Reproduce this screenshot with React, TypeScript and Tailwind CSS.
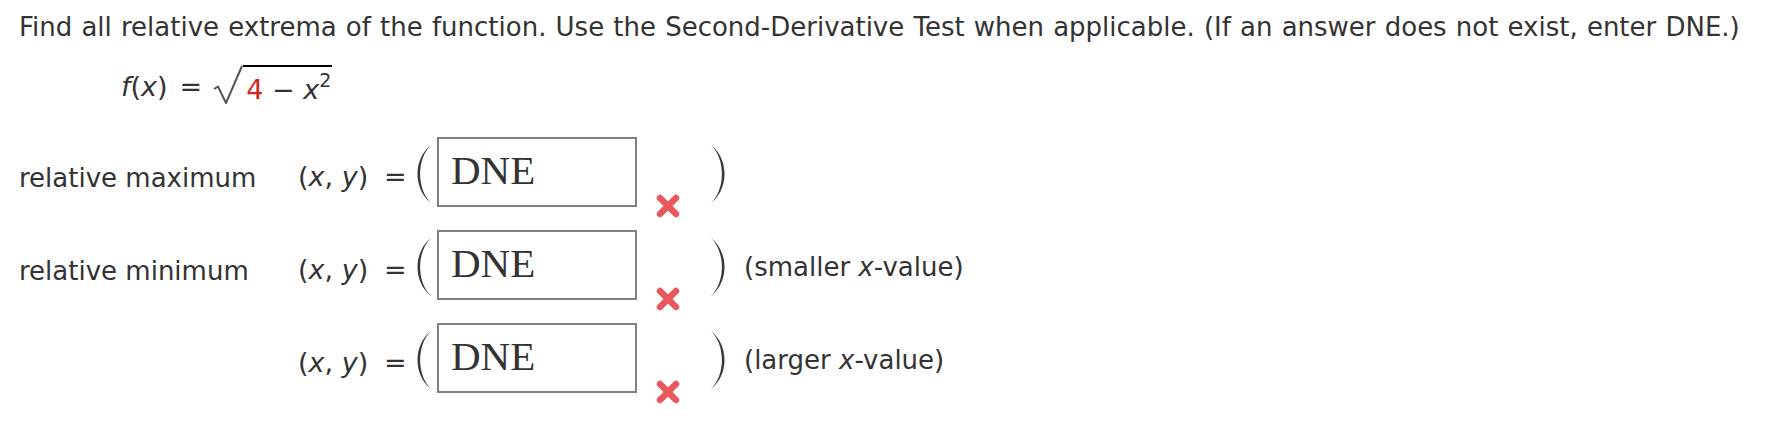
import React from "react";

const LeftParen = () => (
  <svg width="15" height="58" viewBox="0 0 15 58" className="shrink-0 mt-[8px]">
    <path d="M14,0 C-4,14 -4,44 14,58 C-0.5,44 -0.5,14 14,0 Z" fill="#3a3a3a" />
  </svg>
);

const RightParen = () => (
  <svg width="15" height="58" viewBox="0 0 15 58" className="shrink-0 mt-[8px]">
    <path d="M1,0 C19,14 19,44 1,58 C15.5,44 15.5,14 1,0 Z" fill="#3a3a3a" />
  </svg>
);

const WrongMark = () => (
  <svg width="26" height="26" viewBox="0 0 26 26" className="shrink-0">
    <g stroke="#e8585c" strokeWidth="6.5" strokeLinecap="round">
      <line x1="5" y1="5" x2="21" y2="21" />
      <line x1="21" y1="5" x2="5" y2="21" />
    </g>
  </svg>
);

type Row = { label?: string; note?: React.ReactNode };

const rows: Row[] = [
  { label: "relative maximum" },
  {
    label: "relative minimum",
    note: (
      <>
        (smaller <i>x</i>-value)
      </>
    ),
  },
  {
    note: (
      <>
        (larger <i>x</i>-value)
      </>
    ),
  },
];

export default function App() {
  return (
    <div className="w-full h-[432px] bg-white text-[#333] font-['DejaVu_Sans','Noto_Sans',sans-serif] text-[26px] leading-[30px] px-[19px] pt-[12px] overflow-hidden">
      <p className="[word-spacing:0.9px] whitespace-nowrap">
        Find all relative extrema of the function. Use the Second-Derivative Test when applicable. (If an answer does not
        exist, enter DNE.)
      </p>

      <div className="mt-[23px] ml-[102px] flex items-start h-[40px] text-[27px] leading-[32px]">
        <span className="mt-[6px] whitespace-pre">
          <i>f</i>(<i>x</i>)
        </span>
        <span className="mt-[6px] ml-[12px]">=</span>
        <svg width="30" height="40" viewBox="0 0 30 40" className="ml-[11px] shrink-0">
          <path d="M1,24 L5,21.5 L13,38 L29,1" fill="none" stroke="#555" strokeWidth="2" strokeLinejoin="round" />
        </svg>
        <span className="border-t-2 border-black pt-[4px] pl-[3px] pr-[1px] whitespace-pre leading-[32px]">
          <span className="text-[#cc2a22]">4</span> − <i>x</i>
          <span className="text-[19px] leading-none [vertical-align:12px]">2</span>
        </span>
      </div>

      <div className="mt-[32px] flex flex-col gap-[23px]">
        {rows.map((row, i) => (
          <div key={i} className="flex items-start h-[70px]">
            <span className="w-[279px] shrink-0 pt-[26px] whitespace-nowrap">{row.label ?? ""}</span>
            <span className="w-[86px] shrink-0 pt-[25px] whitespace-nowrap text-[27px]">
              (<i>x</i>, <i>y</i>)
            </span>
            <span className="w-[33px] shrink-0 pt-[25px] text-[27px]">=</span>
            <LeftParen />
            <div className="ml-[5px] w-[200px] h-[70px] shrink-0 border-2 border-[#808080] bg-white pl-[12px] pt-[9px] font-['Liberation_Serif',serif] text-[41px] leading-[44px] text-[#333]">
              DNE
            </div>
            <div className="ml-[18px] mt-[56px]">
              <WrongMark />
            </div>
            <div className="ml-[29px]">
              <RightParen />
            </div>
            {row.note && <span className="ml-[19px] pt-[22px] whitespace-nowrap">{row.note}</span>}
          </div>
        ))}
      </div>
    </div>
  );
}
